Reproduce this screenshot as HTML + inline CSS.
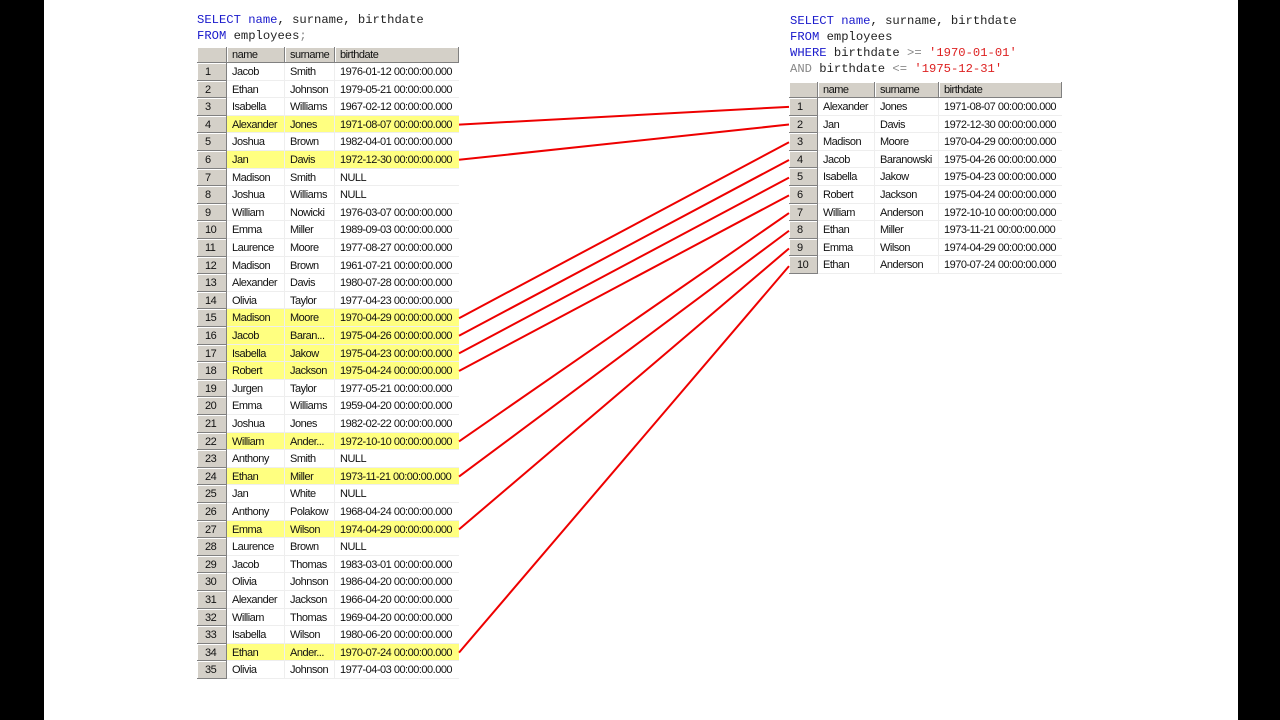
<!DOCTYPE html>
<html><head><meta charset="utf-8"><style>
body{margin:0;width:1280px;height:720px;background:#fff;position:relative;overflow:hidden;font-family:"Liberation Sans",sans-serif}
.bar{position:absolute;top:0;width:44px;height:720px;background:#000}
.code{position:absolute;font-family:"Liberation Mono",monospace;font-size:12.2px;line-height:16px;color:#222;white-space:pre}
.k{color:#1a1acc}.s{color:#d22}.g{color:#888}
.t{position:absolute;font-size:11px;color:#111;letter-spacing:-0.5px}
.r{position:absolute;left:0;height:17.6px;white-space:nowrap}
.c{position:absolute;top:0;height:100%;box-sizing:border-box;line-height:18px;padding-left:5px;border-bottom:1px solid #eee;overflow:hidden}
.h{background:#d4d0c8;border-right:1px solid #808080;border-bottom:1px solid #808080;box-shadow:inset 1px 1px 0 #fff;padding-left:8px}
.hl .c:not(.h){background:#ffff80}
</style></head><body>
<div class="bar" style="left:0"></div><div class="bar" style="left:1238px;width:42px"></div>
<div class="code" style="left:197px;top:12px"><span class="k">SELECT name</span>, surname, birthdate
<span class="k">FROM</span> employees<span class="g">;</span></div>
<div class="code" style="left:790px;top:13px"><span class="k">SELECT name</span>, surname, birthdate
<span class="k">FROM</span> employees
<span class="k">WHERE</span> birthdate <span class="g">&gt;=</span> <span class="s">'1970-01-01'</span>
<span class="g">AND</span> birthdate <span class="g">&lt;=</span> <span class="s">'1975-12-31'</span></div>
<div id="L" class="t" style="left:197px;top:47px"></div>
<div id="R" class="t" style="left:789px;top:82px"></div>
<svg id="S" width="1280" height="720" style="position:absolute;left:0;top:0"></svg>
<script>
var L=[["Jacob","Smith","1976-01-12 00:00:00.000"],["Ethan","Johnson","1979-05-21 00:00:00.000"],["Isabella","Williams","1967-02-12 00:00:00.000"],["Alexander","Jones","1971-08-07 00:00:00.000"],["Joshua","Brown","1982-04-01 00:00:00.000"],["Jan","Davis","1972-12-30 00:00:00.000"],["Madison","Smith","NULL"],["Joshua","Williams","NULL"],["William","Nowicki","1976-03-07 00:00:00.000"],["Emma","Miller","1989-09-03 00:00:00.000"],["Laurence","Moore","1977-08-27 00:00:00.000"],["Madison","Brown","1961-07-21 00:00:00.000"],["Alexander","Davis","1980-07-28 00:00:00.000"],["Olivia","Taylor","1977-04-23 00:00:00.000"],["Madison","Moore","1970-04-29 00:00:00.000"],["Jacob","Baran...","1975-04-26 00:00:00.000"],["Isabella","Jakow","1975-04-23 00:00:00.000"],["Robert","Jackson","1975-04-24 00:00:00.000"],["Jurgen","Taylor","1977-05-21 00:00:00.000"],["Emma","Williams","1959-04-20 00:00:00.000"],["Joshua","Jones","1982-02-22 00:00:00.000"],["William","Ander...","1972-10-10 00:00:00.000"],["Anthony","Smith","NULL"],["Ethan","Miller","1973-11-21 00:00:00.000"],["Jan","White","NULL"],["Anthony","Polakow","1968-04-24 00:00:00.000"],["Emma","Wilson","1974-04-29 00:00:00.000"],["Laurence","Brown","NULL"],["Jacob","Thomas","1983-03-01 00:00:00.000"],["Olivia","Johnson","1986-04-20 00:00:00.000"],["Alexander","Jackson","1966-04-20 00:00:00.000"],["William","Thomas","1969-04-20 00:00:00.000"],["Isabella","Wilson","1980-06-20 00:00:00.000"],["Ethan","Ander...","1970-07-24 00:00:00.000"],["Olivia","Johnson","1977-04-03 00:00:00.000"]];
var R=[["Alexander","Jones","1971-08-07 00:00:00.000"],["Jan","Davis","1972-12-30 00:00:00.000"],["Madison","Moore","1970-04-29 00:00:00.000"],["Jacob","Baranowski","1975-04-26 00:00:00.000"],["Isabella","Jakow","1975-04-23 00:00:00.000"],["Robert","Jackson","1975-04-24 00:00:00.000"],["William","Anderson","1972-10-10 00:00:00.000"],["Ethan","Miller","1973-11-21 00:00:00.000"],["Emma","Wilson","1974-04-29 00:00:00.000"],["Ethan","Anderson","1970-07-24 00:00:00.000"]];
var map=[4,6,15,16,17,18,22,24,27,34];
function build(el,data,w,hl,first){
 var x=[0,w[0],w[0]+w[1],w[0]+w[1]+w[2]],h='<div class="r" style="top:0;height:16px">';
 var hd=["","name","surname",first];
 for(var j=0;j<4;j++)h+='<div class="c h" style="left:'+x[j]+'px;width:'+w[j]+'px;line-height:16px;padding-left:'+(j?5:8)+'px">'+hd[j]+'</div>';
 h+='</div>';
 data.forEach(function(d,i){
  h+='<div class="r'+(hl.indexOf(i+1)>=0?' hl':'')+'" style="top:'+(16+i*17.6)+'px">';
  h+='<div class="c h" style="left:0;width:'+w[0]+'px">'+(i+1)+'</div>';
  for(var j=0;j<3;j++)h+='<div class="c" style="left:'+x[j+1]+'px;width:'+w[j+1]+'px;'+(j<2?'border-right:1px solid #eee':'')+'">'+d[j]+'</div>';
  h+='</div>';});
 el.innerHTML=h;}
build(document.getElementById('L'),L,[30,58,50,124],map,"birthdate");
build(document.getElementById('R'),R,[29,57,64,123],[],"birthdate");
var s='';map.forEach(function(l,i){var y1=63+(l-0.5)*17.6,y2=98+(i+0.5)*17.7;s+='<line x1="459" y1="'+y1+'" x2="789" y2="'+y2+'" stroke="#e00" stroke-width="2"/>';});
document.getElementById('S').innerHTML=s;
</script>
</body></html>
